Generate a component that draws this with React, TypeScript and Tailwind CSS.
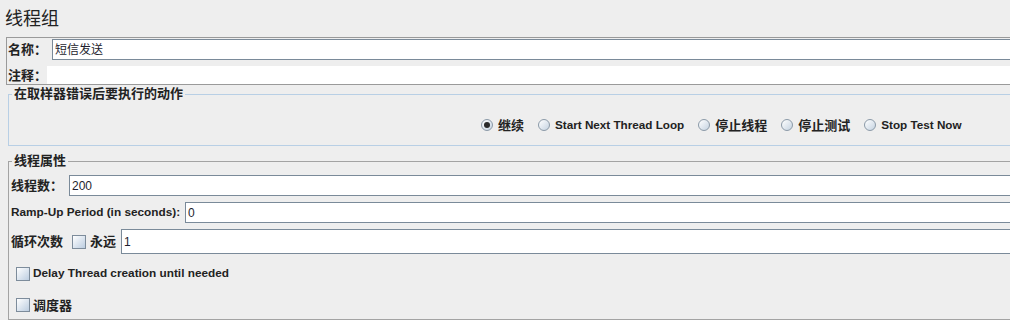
import React from "react";

const FONT = "font-['Liberation_Sans','Noto_Sans_CJK_SC',sans-serif]";

function Radio({ checked }: { checked?: boolean }) {
  return (
    <span className="w-[12px] h-[12px] shrink-0 rounded-full border border-[#8b9aa8] bg-linear-to-br from-white to-[#c5d3e1] flex items-center justify-center">
      {checked && <span className="w-[6px] h-[6px] rounded-full bg-[#2a2a2a]" />}
    </span>
  );
}

function Check() {
  return (
    <span className="w-[14px] h-[14px] shrink-0 border border-[#7d8c9b] bg-linear-to-br from-white to-[#bccde0]" />
  );
}

function Field({ value, h = "h-[21px]" }: { value?: string; h?: string }) {
  return (
    <div className={`${h} flex-1 bg-white border border-[#7a8a99] flex items-center pl-[2px] text-[12px] font-normal text-[#1e1e2e] leading-none`}>
      {value}
    </div>
  );
}

function RadioItem({ label, checked, en }: { label: string; checked?: boolean; en?: boolean }) {
  return (
    <div className="flex items-center">
      <Radio checked={checked} />
      <span className={`ml-[5px] leading-none ${en ? "text-[11.7px]" : "text-[13px]"}`}>{label}</span>
    </div>
  );
}

export default function App() {
  return (
    <div className={`w-[1010px] h-[320px] overflow-hidden bg-[#eeeeee] text-[#222] ${FONT}`}>
      <div className="w-[1040px]">
        <div className="h-[37px] flex items-center pl-[5px] text-[18px] leading-none">线程组</div>

        <div className="ml-[6px] border border-[#9a9a9a] pt-[1px] font-bold text-[13px]">
          <div className="flex items-center h-[21px]">
            <span className="w-[45px] pl-[1px] leading-none">名称：</span>
            <Field value="短信发送" />
          </div>
          <div className="flex items-center h-[18px] mt-[6px]">
            <span className="w-[40px] pl-[1px] leading-none">注释：</span>
            <div className="flex-1 h-[18px] bg-white" />
          </div>
        </div>

        <fieldset className="ml-[8px] mt-[2px] h-[59px] border border-[#b8cfe5] font-bold text-[13px]">
          <legend className="ml-[3px] px-[2px] leading-[14px]">在取样器错误后要执行的动作</legend>
          <div className="mt-[17px] h-[14px] flex items-center pl-[472px] gap-[14px]">
            <RadioItem label="继续" checked />
            <RadioItem label="Start Next Thread Loop" en />
            <RadioItem label="停止线程" />
            <RadioItem label="停止测试" />
            <RadioItem label="Stop Test Now" en />
          </div>
        </fieldset>

        <fieldset className="ml-[8px] mt-[8px] h-[166px] border border-[#a3a3a3] font-bold text-[13px]">
          <legend className="ml-[3px] px-[2px] leading-[14px]">线程属性</legend>
          <div className="mt-[7px] flex items-center h-[21px] pl-[2px]">
            <span className="w-[58px] leading-none">线程数：</span>
            <Field value="200" />
          </div>
          <div className="mt-[6px] flex items-center h-[21px] pl-[2px]">
            <span className="w-[174px] leading-none text-[11.8px]">Ramp-Up Period (in seconds):</span>
            <Field value="0" />
          </div>
          <div className="mt-[6px] flex items-center h-[25px] pl-[2px]">
            <span className="w-[61px] leading-none">循环次数</span>
            <Check />
            <span className="ml-[4px] w-[31px] leading-none">永远</span>
            <Field value="1" h="h-[25px]" />
          </div>
          <div className="mt-[13px] flex items-center h-[14px] pl-[7px]">
            <Check />
            <span className="ml-[3px] leading-none text-[11.8px]">Delay Thread creation until needed</span>
          </div>
          <div className="mt-[17px] flex items-center h-[14px] pl-[7px]">
            <Check />
            <span className="ml-[3px] leading-none">调度器</span>
          </div>
        </fieldset>
      </div>
    </div>
  );
}
